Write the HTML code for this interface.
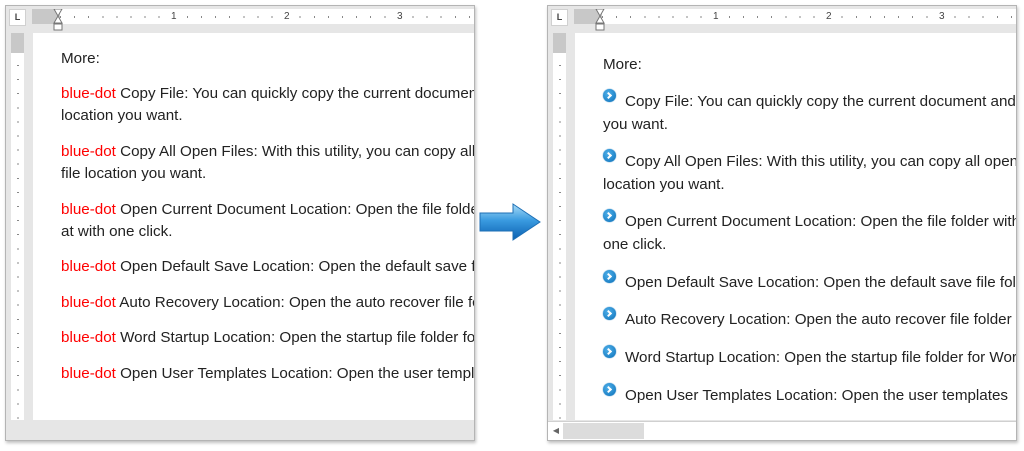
<!DOCTYPE html>
<html><head><meta charset="utf-8"><style>
body{margin:0;width:1024px;height:451px;background:#fff;position:relative;overflow:hidden;font-family:"Liberation Sans",sans-serif;}
.win{position:absolute;top:5px;width:468px;height:434px;background:#e6e6e6;border:1px solid #b4b4b4;box-shadow:1px 2px 3px rgba(0,0,0,.25);overflow:hidden}
.hr{position:absolute;left:26px;top:3px;right:0;height:15px;background:#fff}
.hr .g{position:absolute;left:0;top:0;width:28px;height:15px;background:#c8c8c8}
.tab{position:absolute;left:3px;top:3px;width:15px;height:15px;background:#fff;border:1px solid #d0d0d0;font-size:9px;font-weight:bold;text-align:center;line-height:15px;color:#444}
.vr{position:absolute;left:5px;top:27px;width:13px;height:387px;background:#fff}
.vr .g{position:absolute;left:0;top:0;width:13px;height:20px;background:#c8c8c8}
.page{position:absolute;left:27px;top:27px;right:0;height:387px;background:#fff;overflow:hidden}
.t{position:absolute;white-space:nowrap;font-size:15.2px;color:#222}
.r{color:#f00}
.num{position:absolute;top:2px;font-size:10px;color:#444}
.ticks{position:absolute;left:28px;top:7px;right:0;height:2px;background:repeating-linear-gradient(90deg,#888 0 1px,transparent 1px 14.1px)}
.vt{position:absolute;left:6px;top:32px;width:2px;height:355px;background:repeating-linear-gradient(180deg,#888 0 1px,transparent 1px 14.1px)}
.hg{position:absolute;left:21px;top:0;width:10px;height:22px}
.ic{display:inline-block;width:13px;height:13px;border-radius:50%;background:radial-gradient(circle at 40% 35%,#4fb0ea,#0a6fb8);margin-right:9px;position:relative;top:-6px;vertical-align:middle;box-shadow:0 0 1px #0a6fb8}
.ic:after{content:"";position:absolute;left:3px;top:4px;width:3px;height:3px;border-right:2px solid #fff;border-top:2px solid #fff;transform:rotate(45deg)}
</style></head><body>

<div class="win" style="left:5px">
 <div class="tab">L</div>
 <div class="hr"><div class="g"></div><div class="ticks"></div>
  <span class="num" style="left:139px;background:#fff">1</span><span class="num" style="left:252px;background:#fff">2</span><span class="num" style="left:365px;background:#fff">3</span>
  <svg class="hg" viewBox="0 0 10 22"><path d="M1 0H9L5 7Z M5 7L1 14H9Z" fill="#fff" stroke="#777"/><rect x="1" y="15" width="8" height="6" fill="#fff" stroke="#777"/></svg>
 </div>
 <div class="vr"><div class="g"></div><div class="vt"></div></div>
 <div class="page">
  <div class="t" style="left:28px;top:17px">More:</div>
  <div class="t" style="left:28px;top:52px"><span class="r">blue-dot</span> Copy File: You can quickly copy the current document to the</div>
  <div class="t" style="left:28px;top:74px">location you want.</div>
  <div class="t" style="left:28px;top:110px"><span class="r">blue-dot</span> Copy All Open Files: With this utility, you can copy all open</div>
  <div class="t" style="left:28px;top:132px">file location you want.</div>
  <div class="t" style="left:28px;top:168px"><span class="r">blue-dot</span> Open Current Document Location: Open the file folder</div>
  <div class="t" style="left:28px;top:190px">at with one click.</div>
  <div class="t" style="left:28px;top:225px"><span class="r">blue-dot</span> Open Default Save Location: Open the default save file</div>
  <div class="t" style="left:28px;top:261px"><span class="r">blue-dot</span> Auto Recovery Location: Open the auto recover file folder</div>
  <div class="t" style="left:28px;top:296px"><span class="r">blue-dot</span> Word Startup Location: Open the startup file folder for</div>
  <div class="t" style="left:28px;top:332px"><span class="r">blue-dot</span> Open User Templates Location: Open the user templates</div>
 </div>
</div>

<svg style="position:absolute;left:478px;top:203px" width="64" height="40" viewBox="0 0 64 40">
<defs><linearGradient id="a" x1="0" y1="0" x2="0" y2="1"><stop offset="0" stop-color="#a9dcf7"/><stop offset=".45" stop-color="#3a9be0"/><stop offset="1" stop-color="#0a5fb0"/></linearGradient></defs>
<path d="M2 10 H35 V1 L62 19 L35 37 V28 H2 Z" fill="url(#a)" stroke="#1d6fb5" stroke-width="1"/>
</svg>

<div class="win" style="left:547px">
 <div class="tab">L</div>
 <div class="hr"><div class="g"></div><div class="ticks"></div>
  <span class="num" style="left:139px;background:#fff">1</span><span class="num" style="left:252px;background:#fff">2</span><span class="num" style="left:365px;background:#fff">3</span>
  <svg class="hg" viewBox="0 0 10 22"><path d="M1 0H9L5 7Z M5 7L1 14H9Z" fill="#fff" stroke="#777"/><rect x="1" y="15" width="8" height="6" fill="#fff" stroke="#777"/></svg>
 </div>
 <div class="vr"><div class="g"></div><div class="vt"></div></div>
 <div class="page">
  <div class="t" style="left:28px;top:23px">More:</div>
  <div class="t" style="left:28px;top:60px"><span class="ic"></span>Copy File: You can quickly copy the current document and</div>
  <div class="t" style="left:28px;top:83px">you want.</div>
  <div class="t" style="left:28px;top:120px"><span class="ic"></span>Copy All Open Files: With this utility, you can copy all open</div>
  <div class="t" style="left:28px;top:143px">location you want.</div>
  <div class="t" style="left:28px;top:180px"><span class="ic"></span>Open Current Document Location: Open the file folder with</div>
  <div class="t" style="left:28px;top:203px">one click.</div>
  <div class="t" style="left:28px;top:241px"><span class="ic"></span>Open Default Save Location: Open the default save file folder</div>
  <div class="t" style="left:28px;top:278px"><span class="ic"></span>Auto Recovery Location: Open the auto recover file folder</div>
  <div class="t" style="left:28px;top:316px"><span class="ic"></span>Word Startup Location: Open the startup file folder for Word</div>
  <div class="t" style="left:28px;top:354px"><span class="ic"></span>Open User Templates Location: Open the user templates</div>
 </div>
 <div style="position:absolute;left:0;top:415px;width:468px;height:18px;background:#fff;border-top:1px solid #d0d0d0">
  <div style="position:absolute;left:2px;top:2px;width:12px;height:14px;font-size:8px;color:#666;line-height:14px;text-align:center">◀</div>
  <div style="position:absolute;left:15px;top:1px;width:81px;height:16px;background:#dcdcdc"></div>
 </div>
</div>
</body></html>
